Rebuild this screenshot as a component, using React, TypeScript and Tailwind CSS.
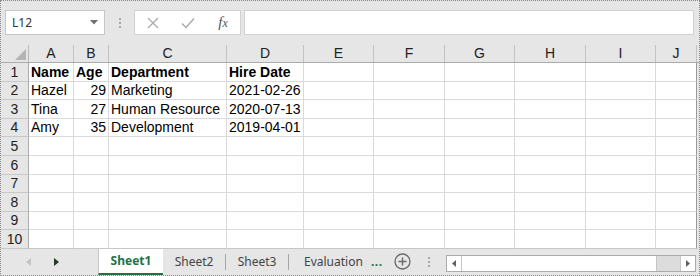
import React from "react";

const cols = [
  { l: "A", w: 45 },
  { l: "B", w: 35 },
  { l: "C", w: 118 },
  { l: "D", w: 77 },
  { l: "E", w: 70 },
  { l: "F", w: 71 },
  { l: "G", w: 70 },
  { l: "H", w: 71 },
  { l: "I", w: 70 },
  { l: "J", w: 41 },
];

type Cell = { t: string; bold?: boolean; right?: boolean };

const data: Cell[][] = [
  [
    { t: "Name", bold: true },
    { t: "Age", bold: true },
    { t: "Department", bold: true },
    { t: "Hire Date", bold: true },
  ],
  [{ t: "Hazel" }, { t: "29", right: true }, { t: "Marketing" }, { t: "2021-02-26" }],
  [{ t: "Tina" }, { t: "27", right: true }, { t: "Human Resource" }, { t: "2020-07-13" }],
  [{ t: "Amy" }, { t: "35", right: true }, { t: "Development" }, { t: "2019-04-01" }],
];

const cellFont = { fontFamily: '"Liberation Sans", Arial, sans-serif' };
const uiFont = { fontFamily: '"Noto Sans", "Segoe UI", sans-serif' };

function VDots() {
  return (
    <div className="flex flex-col gap-[2px]">
      <div className="w-[2px] h-[2px] bg-[#a8a8a8]" />
      <div className="w-[2px] h-[2px] bg-[#a8a8a8]" />
      <div className="w-[2px] h-[2px] bg-[#a8a8a8]" />
    </div>
  );
}

export default function App() {
  return (
    <div
      className="w-[700px] h-[276px] border border-dotted border-[#8a8a8a] bg-[#e6e6e6] flex flex-col overflow-hidden"
      style={cellFont}
    >
      {/* Formula bar */}
      <div className="h-[44px] flex items-start shrink-0">
        <div
          className="ml-[4px] mt-[9px] w-[100px] h-[25px] bg-white border border-[#c6c6c6] flex items-center justify-between pl-[6px] pr-[6px]"
          style={uiFont}
        >
          <span className="text-[12px] text-[#333]">L12</span>
          <svg width="8" height="5" viewBox="0 0 8 5">
            <path d="M0 0 L8 0 L4 4.5 Z" fill="#6f6f6f" />
          </svg>
        </div>
        <div className="w-[29px] h-[25px] mt-[9px] flex items-center justify-center">
          <VDots />
        </div>
        <div className="mt-[9px] w-[107px] h-[25px] bg-white border border-[#d2d2d2] flex items-center">
          <div className="w-[35px] flex justify-center">
            <svg width="12" height="12" viewBox="0 0 12 12">
              <path d="M1 1 L11 11 M11 1 L1 11" stroke="#ababab" strokeWidth="1.3" fill="none" />
            </svg>
          </div>
          <div className="w-[36px] flex justify-center">
            <svg width="14" height="12" viewBox="0 0 14 12">
              <path d="M1 6.5 L5 10.5 L13 1.5" stroke="#ababab" strokeWidth="1.5" fill="none" />
            </svg>
          </div>
          <div className="w-[34px] flex justify-center">
            <span
              className="italic text-[#555] text-[15px] leading-none"
              style={{ fontFamily: '"Liberation Serif", "Times New Roman", serif' }}
            >
              f<span className="text-[12px]">x</span>
            </span>
          </div>
        </div>
        <div className="ml-[3px] mt-[9px] w-[450px] h-[25px] bg-white border border-[#d2d2d2]" />
      </div>

      {/* Column headers */}
      <div className="h-[18px] flex shrink-0 border-b border-[#ababab] bg-[#e6e6e6]">
        <div className="w-[28px] h-full border-r border-[#b8b8b8] relative">
          <svg className="absolute right-[2px] bottom-[2px]" width="11" height="11" viewBox="0 0 11 11">
            <path d="M11 0 L11 11 L0 11 Z" fill="#b4b4b4" />
          </svg>
        </div>
        {cols.map((c) => (
          <div
            key={c.l}
            className="h-full border-r border-[#c2c2c2] flex items-end justify-center text-[14px] text-[#222] leading-[16px] pb-[1px]"
            style={{ width: c.w }}
          >
            {c.l}
          </div>
        ))}
      </div>

      {/* Rows */}
      <div className="flex flex-col shrink-0">
        {Array.from({ length: 10 }).map((_, r) => (
          <div key={r} className="h-[18.6px] flex">
            <div className="w-[28px] h-full bg-[#e6e6e6] border-r border-[#ababab] border-b border-b-[#c8c8c8] flex items-end justify-center text-[14px] text-[#222] leading-[17px]">
              {r + 1}
            </div>
            {cols.map((c, ci) => {
              const cell = data[r]?.[ci];
              return (
                <div
                  key={c.l}
                  className={`h-full bg-white border-r border-b border-[#dadada] flex items-end overflow-visible whitespace-nowrap text-[14px] text-black leading-[17px] ${
                    cell?.right ? "justify-end pr-[2px]" : "justify-start pl-[2px]"
                  } ${cell?.bold ? "font-bold" : ""} ${ci === cols.length - 1 ? "border-r-[#9a9a9a]" : ""} ${
                    r === 9 ? "border-b-[#c6c6c6]" : ""
                  }`}
                  style={{ width: c.w }}
                >
                  {cell?.t ?? ""}
                </div>
              );
            })}
          </div>
        ))}
      </div>

      {/* Sheet tabs */}
      <div className="flex-1 flex items-stretch" style={uiFont}>
        <div className="w-[97px] flex items-center">
          <div className="w-[30px] flex justify-end">
            <svg width="5" height="8" viewBox="0 0 5 8">
              <path d="M5 0 L5 8 L0 4 Z" fill="#c4c4c4" />
            </svg>
          </div>
          <div className="w-[28px] flex justify-end">
            <svg width="5" height="8" viewBox="0 0 5 8">
              <path d="M0 0 L0 8 L5 4 Z" fill="#1f3b2a" />
            </svg>
          </div>
        </div>
        <div className="w-[65px] bg-white border-l border-[#c6c6c6] border-b-2 border-b-[#217346] flex items-center justify-center text-[12px] font-bold text-[#217346]">
          Sheet1
        </div>
        <div className="w-[62px] flex items-center justify-center text-[12px] text-[#444]">Sheet2</div>
        <div className="w-px h-[16px] self-center bg-[#a6a6a6]" />
        <div className="w-[62px] flex items-center justify-center text-[12px] text-[#444]">Sheet3</div>
        <div className="w-px h-[16px] self-center bg-[#a6a6a6]" />
        <div className="w-[82px] flex items-center pl-[15px] text-[12px] text-[#444]">Evaluation</div>
        <div className="w-[23px] flex items-center text-[12px] font-bold text-[#217346] tracking-[0.5px]">...</div>
        <div className="w-[17px] flex items-center">
          <svg width="17" height="17" viewBox="0 0 17 17">
            <circle cx="8.5" cy="8.5" r="7.5" stroke="#6a6a6a" strokeWidth="1.3" fill="none" />
            <path d="M8.5 4.5 V12.5 M4.5 8.5 H12.5" stroke="#6a6a6a" strokeWidth="1.4" />
          </svg>
        </div>
        <div className="w-[35px] flex items-center justify-center">
          <VDots />
        </div>
        <div className="mt-[6px] h-[17px] w-[250px] flex border border-[#ababab] bg-[#dcdcdc]">
          <div className="w-[15px] h-full bg-white border-r border-[#c6c6c6] flex items-center justify-center">
            <svg width="4" height="7" viewBox="0 0 4 7">
              <path d="M4 0 L4 7 L0 3.5 Z" fill="#606060" />
            </svg>
          </div>
          <div className="w-[195px] h-full bg-white border-r border-[#c6c6c6]" />
          <div className="flex-1" />
          <div className="w-[15px] h-full bg-white border-l border-[#c6c6c6] flex items-center justify-center">
            <svg width="4" height="7" viewBox="0 0 4 7">
              <path d="M0 0 L0 7 L4 3.5 Z" fill="#606060" />
            </svg>
          </div>
        </div>
      </div>
    </div>
  );
}
